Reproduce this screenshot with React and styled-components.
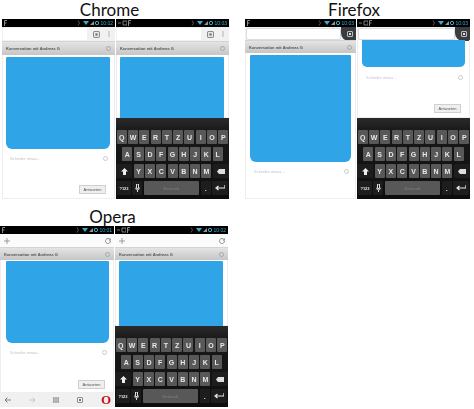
import React from 'react';
import styled, { createGlobalStyle } from 'styled-components';

const GlobalStyle = createGlobalStyle`
    html, body {
        margin: 0;
        padding: 0;
        background: #fff;
    }
    body {
        width: 474px;
        height: 409px;
        overflow: hidden;
        font-family: "Liberation Sans", Arial, sans-serif;
    }
`;

const Page = styled.div`
    display: grid;
    grid-template-columns: 245px 229px;
    grid-template-rows: 208px 201px;
    width: 474px;
    height: 409px;
`;

const Section = styled.section`
    display: flex;
    flex-direction: column;
    padding-left: ${props => props.$left}px;
`;

const Title = styled.h2`
    margin: 0;
    height: ${props => props.$height}px;
    width: ${props => props.$width}px;
    text-align: center;
    font-family: Lato, "Open Sans", sans-serif;
    font-weight: 400;
    font-size: 17px;
    line-height: ${props => props.$height}px;
    color: #111;
`;

const Pair = styled.div`
    display: flex;
    gap: 1px;
`;

const Phone = styled.div`
    display: flex;
    flex-direction: column;
    width: ${props => props.$width}px;
    height: ${props => props.$height}px;
    overflow: hidden;
    background: #fff;
    filter: blur(0.45px);
`;

const StatusBar = styled.div`
    flex: none;
    display: flex;
    align-items: center;
    justify-content: space-between;
    height: 8px;
    padding: 0 2px;
    background: #000;
`;

const StatusGroup = styled.div`
    display: flex;
    align-items: center;
    gap: 1px;
`;

const Clock = styled.span`
    font-size: 5px;
    line-height: 8px;
    color: #3fa9c9;
`;

const UrlBar = styled.div`
    flex: none;
    display: flex;
    align-items: center;
    justify-content: space-between;
    height: ${props => props.$height}px;
    padding: 0 3px 0 ${props => props.$left || 4}px;
    background: ${props => props.$bg || '#f1f1f1'};
`;

const UrlField = styled.div`
    flex: 1;
    height: 12px;
    margin-right: 6px;
    background: #fff;
`;

const FoxField = styled.div`
    flex: 1;
    height: 10px;
    background: #fff;
    border: 1px solid #ddd;
    border-radius: 2px;
`;

const FoxTab = styled.div`
    flex: none;
    display: flex;
    align-items: center;
    justify-content: center;
    width: 13px;
    height: 14px;
    margin-right: -3px;
    padding-left: 2px;
    background: #3a3d40;
    border-bottom-left-radius: 8px;
`;

const ChatHeader = styled.div`
    flex: none;
    display: flex;
    align-items: center;
    justify-content: space-between;
    box-sizing: border-box;
    height: ${props => props.$height || 14}px;
    padding: 0 4px;
    background: linear-gradient(#e4e4e4, #c6c6c6);
    border-top: 1px solid #d4d4d4;
`;

const HeaderText = styled.span`
    font-size: 4px;
    font-weight: 700;
    color: #555;
    white-space: nowrap;
`;

const Dot = styled.span`
    width: 3px;
    height: 3px;
    border: 1px solid ${props => props.$color || '#a8a8a8'};
    border-radius: 50%;
`;

const Body = styled.div`
    flex: 1;
    min-height: 0;
    display: flex;
    flex-direction: column;
    padding: ${props => props.$top}px ${props => props.$right || 4}px 0 ${props => props.$left || 4}px;
    border-left: 1px solid #eee;
    border-right: 1px solid #eee;
    border-bottom: 1px solid #eee;
`;

const BlueCard = styled.div`
    flex: none;
    height: ${props => props.$height}px;
    background: #2fa4e7;
    border-radius: ${props => props.$flat ? '0 0 5px 5px' : '1px 1px 6px 6px'};
`;

const Compose = styled.div`
    flex: 1;
    min-height: 0;
    display: flex;
    flex-direction: column;
`;

const Prompt = styled.div`
    flex: none;
    display: flex;
    align-items: center;
    justify-content: space-between;
    height: ${props => props.$height}px;
    padding: 0 2px 0 4px;
`;

const PromptText = styled.span`
    font-size: 4px;
    color: ${props => props.$color || '#c4c4c4'};
    white-space: nowrap;
`;

const ReplyRow = styled.div`
    flex: 1;
    display: flex;
    align-items: flex-end;
    justify-content: flex-end;
    padding: 0 4px ${props => props.$bottom}px 0;
`;

const ReplyButton = styled.button`
    height: 9px;
    width: 27px;
    padding: 0;
    border: 1px solid #d0d0d0;
    background: #efefef;
    font-family: inherit;
    font-size: 4px;
    color: #555;
`;

const Keyboard = styled.div`
    flex: none;
    display: flex;
    flex-direction: column;
    gap: 3px;
    height: 81px;
    padding: 12px 1px 0;
    box-sizing: border-box;
    background: linear-gradient(#2a2a2a, #1a1a1a 15%, #0d0d0d);
`;

const KeyRow = styled.div`
    display: flex;
    justify-content: center;
    gap: 1.3px;
`;

const Key = styled.div`
    flex: ${props => props.$grow ? 1 : 'none'};
    display: flex;
    align-items: center;
    justify-content: center;
    width: ${props => props.$wide || 10}px;
    height: 14px;
    background: ${props => props.$dark ? '#1d1d1d' : '#585858'};
    border-radius: 1px;
    font-size: ${props => props.$small ? 4 : 7}px;
    font-weight: 700;
    color: ${props => props.$muted ? '#777' : '#e8e8e8'};
`;

const BottomBar = styled.div`
    flex: none;
    display: flex;
    align-items: center;
    justify-content: space-between;
    height: 14px;
    padding: 0 3px 0 4px;
    background: #f0f0f0;
`;

const OperaMark = styled.span`
    font-family: "Liberation Serif", serif;
    font-size: 13px;
    font-weight: 700;
    line-height: 14px;
    color: #c4121c;
`;

const SignalIcons = () => (
    <svg width="22" height="6" viewBox="0 0 22 6">
        <path d="M1 .5l1.500 2.500-1.500 2.500" fill="none" stroke="#777" strokeWidth="0.7" />
        <path d="M6 1h6L9 5z" fill="#3fa9c9" />
        <path d="M13 5l4-4v4z" fill="#8a9a9a" />
        <circle cx="20" cy="3" r="1.700" fill="none" stroke="#3fa9c9" strokeWidth="1" />
    </svg>
);

const StatusLeft = ({ extra }) => (
    <StatusGroup>
        {extra && (
            <svg width="9" height="6" viewBox="0 0 9 6">
                <path d="M0 3h3M5 1h4v4H5z" fill="none" stroke="#999" strokeWidth="0.8" />
            </svg>
        )}
        <svg width="3" height="6" viewBox="0 0 3 6">
            <path d="M.5 6V.5h2.500M.5 3H2.500" fill="none" stroke="#999" strokeWidth="0.9" />
        </svg>
    </StatusGroup>
);

const Status = ({ time, extra }) => (
    <StatusBar>
        <StatusLeft extra={extra} />
        <StatusGroup>
            <SignalIcons />
            <Clock>{time}</Clock>
        </StatusGroup>
    </StatusBar>
);

const TabIcon = ({ color = '#777', size = 7 }) => (
    <svg width={size} height={size} viewBox="0 0 6 6">
        <rect x="0.500" y="0.500" width="5" height="5" rx="0.500" fill="none" stroke={color} strokeWidth="0.800" />
        <rect x="2" y="2" width="2" height="2" fill={color} />
    </svg>
);

const ChromeUrl = () => (
    <UrlBar $height={14} $left={1}>
        <UrlField />
        <TabIcon />
        <svg width="12" height="6" viewBox="0 0 12 6">
            <path d="M9 .5v1M9 2.500v1M9 4.500v1" stroke="#777" strokeWidth="1" />
        </svg>
    </UrlBar>
);

const FirefoxUrl = () => (
    <UrlBar $height={13} $left={1}>
        <FoxField />
        <FoxTab>
            <TabIcon color="#ddd" size={6} />
        </FoxTab>
    </UrlBar>
);

const OperaUrl = () => (
    <UrlBar $height={13} $bg="#fbfbfb">
        <svg width="6" height="6" viewBox="0 0 6 6">
            <path d="M3 0v6M0 3h6" stroke="#888" strokeWidth="0.800" />
        </svg>
        <svg width="6" height="6" viewBox="0 0 6 6">
            <path d="M5 1.500A2.500 2.500 0 1 0 5.500 3M5.600 .4v1.800H3.800" fill="none" stroke="#777" strokeWidth="0.800" />
        </svg>
    </UrlBar>
);

const Header = ({ height }) => (
    <ChatHeader $height={height}>
        <HeaderText>Konversation mit Andreas G</HeaderText>
        <Dot />
    </ChatHeader>
);

const PromptLine = ({ height, color }) => (
    <Prompt $height={height}>
        <PromptText $color={color}>Schreibe etwas...</PromptText>
        <Dot $color="#ccc" />
    </Prompt>
);

const Reply = ({ bottom }) => (
    <ReplyRow $bottom={bottom}>
        <ReplyButton>Antworten</ReplyButton>
    </ReplyRow>
);

const ROWS = [
    ['Q', 'W', 'E', 'R', 'T', 'Z', 'U', 'I', 'O', 'P'],
    ['A', 'S', 'D', 'F', 'G', 'H', 'J', 'K', 'L'],
];

const Keys = () => (
    <Keyboard>
        {ROWS.map((row) => (
            <KeyRow key={row[0]}>
                {row.map((letter) => <Key key={letter}>{letter}</Key>)}
            </KeyRow>
        ))}
        <KeyRow>
            <Key $dark $wide={16}>
                <svg width="7" height="7" viewBox="0 0 7 7"><path d="M3.500 0L7 3.500H5V7H2V3.500H0z" fill="#eee" /></svg>
            </Key>
            {['Y', 'X', 'C', 'V', 'B', 'N', 'M'].map((letter) => <Key key={letter}>{letter}</Key>)}
            <Key $dark $wide={16}>
                <svg width="8" height="5" viewBox="0 0 8 5"><path d="M2 0h6v5H2L0 2.500z" fill="#ddd" /></svg>
            </Key>
        </KeyRow>
        <KeyRow>
            <Key $dark $small $wide={14}>?123</Key>
            <Key $dark $wide={10}>
                <svg width="5" height="8" viewBox="0 0 5 8"><path d="M1.500 0h2v4.500h-2zM0 3.500c0 3 5 3 5 0M2.500 6v2" fill="none" stroke="#ddd" strokeWidth="1" /></svg>
            </Key>
            <Key $grow $small $muted>Deutsch</Key>
            <Key $dark $wide={10}>.</Key>
            <Key $dark $wide={16}>
                <svg width="10" height="6" viewBox="0 0 10 6"><path d="M10 0v3H2M3.500 1L1 3l2.500 2" fill="none" stroke="#eee" strokeWidth="1.200" /></svg>
            </Key>
        </KeyRow>
    </Keyboard>
);

const App = () => (
    <>
        <GlobalStyle />
        <Page>
            <Section $left={2}>
                <Title $height={19} $width={215}>Chrome</Title>
                <Pair>
                    <Phone $width={113} $height={180}>
                        <Status time="10:02" />
                        <ChromeUrl />
                        <Header />
                        <Body $top={2} $left={3}>
                            <BlueCard $height={92} />
                            <Compose>
                                <PromptLine height={18} />
                                <Reply bottom={4} />
                            </Compose>
                        </Body>
                    </Phone>
                    <Phone $width={113} $height={180}>
                        <Status time="10:03" extra />
                        <ChromeUrl />
                        <Header />
                        <Body $top={2} $left={3}>
                            <BlueCard $height={70} />
                        </Body>
                        <Keys />
                    </Phone>
                </Pair>
            </Section>
            <Section $left={0}>
                <Title $height={19} $width={218}>Firefox</Title>
                <Pair>
                    <Phone $width={111} $height={180}>
                        <Status time="10:03" />
                        <FirefoxUrl />
                        <Header height={13} />
                        <Body $top={2}>
                            <BlueCard $height={107} />
                            <Compose>
                                <PromptLine height={18} />
                            </Compose>
                        </Body>
                    </Phone>
                    <Phone $width={113} $height={180}>
                        <Status time="10:03" extra />
                        <FirefoxUrl />
                        <Body $top={0}>
                            <BlueCard $height={27} $flat />
                            <Compose>
                                <PromptLine height={21} color="#c9bfe6" />
                                <Reply bottom={4} />
                            </Compose>
                        </Body>
                        <Keys />
                    </Phone>
                </Pair>
            </Section>
            <Section $left={0}>
                <Title $height={18} $width={225}>Opera</Title>
                <Pair>
                    <Phone $width={114} $height={181}>
                        <Status time="10:01" />
                        <OperaUrl />
                        <Header height={13} />
                        <Body $top={1} $left={5}>
                            <BlueCard $height={82} />
                            <Compose>
                                <PromptLine height={18} />
                                <Reply bottom={3} />
                            </Compose>
                        </Body>
                        <BottomBar>
                            <svg width="7" height="6" viewBox="0 0 7 6"><path d="M7 3H1M3.500 .5L1 3l2.500 2.500" fill="none" stroke="#666" strokeWidth="0.800" /></svg>
                            <svg width="7" height="6" viewBox="0 0 7 6"><path d="M0 3h6M3.500 .5L6 3 3.500 5.500" fill="none" stroke="#bbb" strokeWidth="0.800" /></svg>
                            <svg width="6" height="6" viewBox="0 0 6 6"><path d="M0 1h6M0 3h6M0 5h6" stroke="#555" strokeWidth="1.200" strokeDasharray="1.200 .4" /></svg>
                            <TabIcon size={6} />
                            <OperaMark>O</OperaMark>
                        </BottomBar>
                    </Phone>
                    <Phone $width={113} $height={181}>
                        <Status time="10:02" extra />
                        <OperaUrl />
                        <Header height={13} />
                        <Body $top={1} $left={3}>
                            <BlueCard $height={70} />
                        </Body>
                        <Keys />
                    </Phone>
                </Pair>
            </Section>
        </Page>
    </>
);

export default App;
